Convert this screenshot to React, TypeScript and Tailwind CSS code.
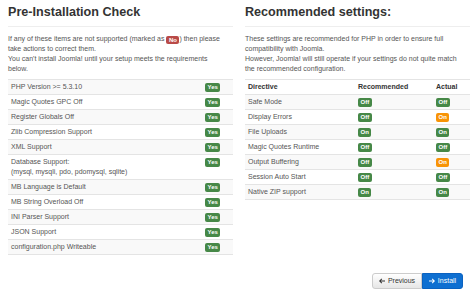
import React from "react";

type Tone = "green" | "orange" | "red";

const toneClass: Record<Tone, string> = {
  green: "bg-[#468847]",
  orange: "bg-[#f89406]",
  red: "bg-[#b94a48]",
};

function Badge({ children, tone = "green" }: { children: React.ReactNode; tone?: Tone }) {
  return (
    <span
      className={`inline-block rounded-[2px] px-[2.5px] text-[6px] font-bold leading-[9px] text-white align-top ${toneClass[tone]}`}
    >
      {children}
    </span>
  );
}

const checks: { label: React.ReactNode }[] = [
  { label: "PHP Version >= 5.3.10" },
  { label: "Magic Quotes GPC Off" },
  { label: "Register Globals Off" },
  { label: "Zlib Compression Support" },
  { label: "XML Support" },
  {
    label: (
      <>
        Database Support:
        <br />
        (mysql, mysqli, pdo, pdomysql, sqlite)
      </>
    ),
  },
  { label: "MB Language is Default" },
  { label: "MB String Overload Off" },
  { label: "INI Parser Support" },
  { label: "JSON Support" },
  { label: "configuration.php Writeable" },
];

const settings: { name: string; rec: string; actual: string; warn?: boolean }[] = [
  { name: "Safe Mode", rec: "Off", actual: "Off" },
  { name: "Display Errors", rec: "Off", actual: "On", warn: true },
  { name: "File Uploads", rec: "On", actual: "On" },
  { name: "Magic Quotes Runtime", rec: "Off", actual: "Off" },
  { name: "Output Buffering", rec: "Off", actual: "On", warn: true },
  { name: "Session Auto Start", rec: "Off", actual: "Off" },
  { name: "Native ZIP support", rec: "On", actual: "On" },
];

function ArrowIcon({ dir }: { dir: "left" | "right" }) {
  return (
    <svg width="6" height="6" viewBox="0 0 12 12" className={dir === "left" ? "" : "rotate-180"}>
      <path d="M0 6 L5 1 L6.4 2.4 L3.8 5 H12 V7 H3.8 L6.4 9.6 L5 11 Z" fill="currentColor" />
    </svg>
  );
}

export default function App() {
  return (
    <div className="flex h-[293px] w-[474px] flex-col overflow-hidden bg-white px-[8px] pt-[4px] pb-[4px] font-['Liberation_Sans',Arial,sans-serif] text-[#333]">
      <div className="grid grid-cols-[225px_225px] gap-x-[12px]">
        {/* Left column */}
        <div>
          <h2 className="text-[12.6px] font-bold leading-[16px]">Pre-Installation Check</h2>
          <hr className="mt-[6px] border-t border-[#eee]" />
          <div className="mt-[7px] text-[7px] leading-[10px] text-[#555]">
            <div className="h-[10px] whitespace-nowrap">
              If any of these items are not supported (marked as{" "}
              <span className="inline-block h-[8px] rounded-[2px] bg-[#b94a48] px-[2.5px] align-[-1px] text-[6px] font-bold leading-[8px] text-white">
                No
              </span>
              ) then please
            </div>
            <div className="h-[10px]">take actions to correct them.</div>
            <div className="h-[10px] whitespace-nowrap">
              You can't install Joomla! until your setup meets the requirements
            </div>
            <div className="h-[10px]">below.</div>
          </div>
          <table className="mt-[5px] w-full border-collapse text-[7px] leading-[10px] text-[#555]">
            <tbody>
              {checks.map((c, i) => (
                <tr
                  key={i}
                  className={`border-t border-[#e4e4e4] ${i % 2 === 0 ? "bg-[#f9f9f9]" : "bg-white"} ${i === checks.length - 1 ? "border-b" : ""}`}
                >
                  <td className="px-[3px] py-[2px] align-top">{c.label}</td>
                  <td className="w-[30px] py-[2.5px] pl-[2px] align-top leading-[9px]">
                    <Badge>Yes</Badge>
                  </td>
                </tr>
              ))}
            </tbody>
          </table>
        </div>

        {/* Right column */}
        <div>
          <h2 className="text-[12.6px] font-bold leading-[16px]">Recommended settings:</h2>
          <hr className="mt-[6px] border-t border-[#eee]" />
          <div className="mt-[7px] text-[7px] leading-[10px] text-[#555]">
            <div className="h-[10px] whitespace-nowrap">
              These settings are recommended for PHP in order to ensure full
            </div>
            <div className="h-[10px]">compatibility with Joomla.</div>
            <div className="h-[10px] whitespace-nowrap">
              However, Joomla! will still operate if your settings do not quite match
            </div>
            <div className="h-[10px]">the recommended configuration.</div>
          </div>
          <table className="mt-[5px] w-full border-collapse text-[7px] leading-[10px] text-[#555]">
            <thead>
              <tr className="border-t border-[#e4e4e4]">
                <th className="px-[3px] py-[2px] text-left font-bold text-[#333]">Directive</th>
                <th className="w-[78px] py-[2px] text-left font-bold text-[#333]">Recommended</th>
                <th className="w-[34px] py-[2px] text-left font-bold text-[#333]">Actual</th>
              </tr>
            </thead>
            <tbody>
              {settings.map((s, i) => (
                <tr
                  key={s.name}
                  className={`border-t border-[#e4e4e4] ${i % 2 === 0 ? "bg-[#f9f9f9]" : "bg-white"} ${i === settings.length - 1 ? "border-b" : ""}`}
                >
                  <td className="px-[3px] py-[2px]">{s.name}</td>
                  <td className="py-[2.5px] leading-[9px]">
                    <Badge>{s.rec}</Badge>
                  </td>
                  <td className="py-[2.5px] leading-[9px]">
                    <Badge tone={s.warn ? "orange" : "green"}>{s.actual}</Badge>
                  </td>
                </tr>
              ))}
            </tbody>
          </table>
        </div>
      </div>

      {/* Buttons */}
      <div className="mt-auto flex justify-end pr-[3px]">
        <button className="flex h-[16px] w-[50px] items-center justify-center gap-[3px] rounded-l-[3px] border border-[#ccc] bg-gradient-to-b from-white to-[#e6e6e6] text-[7px] text-[#333]">
          <ArrowIcon dir="left" />
          Previous
        </button>
        <button className="flex h-[16px] w-[41px] items-center justify-center gap-[3px] rounded-r-[3px] border border-[#0b62c0] bg-[#0e6fd1] text-[7px] text-white">
          <ArrowIcon dir="right" />
          Install
        </button>
      </div>
    </div>
  );
}
